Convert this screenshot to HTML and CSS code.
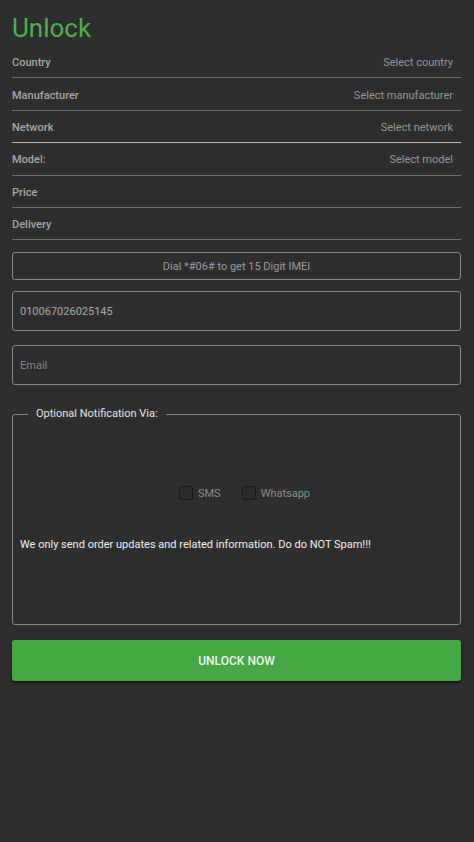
FILE: index.html
```html
<!DOCTYPE html>
<html>
<head>
<meta charset="utf-8">
<link rel="stylesheet" href="styles.css">
</head>
<body>
<div class="page">
  <h1 class="title">Unlock</h1>
  <div class="rows">
    <div class="row"><span class="label">Country</span><span class="value">Select country</span></div>
    <div class="row"><span class="label">Manufacturer</span><span class="value">Select manufacturer</span></div>
    <div class="row row-active"><span class="label">Network</span><span class="value">Select network</span></div>
    <div class="row"><span class="label">Model:</span><span class="value">Select model</span></div>
    <div class="row"><span class="label">Price</span><span class="value"></span></div>
    <div class="row"><span class="label">Delivery</span><span class="value"></span></div>
  </div>
  <div class="dial">Dial *#06# to get 15 Digit IMEI</div>
  <div class="field imei">010067026025145</div>
  <div class="field email">Email</div>
  <fieldset class="notify">
    <legend class="legend">Optional Notification Via:</legend>
    <div class="checks">
      <label class="check"><span class="box"></span><span class="check-text">SMS</span></label>
      <label class="check"><span class="box"></span><span class="check-text">Whatsapp</span></label>
    </div>
    <p class="note">We only send order updates and related information. Do do NOT Spam!!!</p>
  </fieldset>
  <div class="btn">UNLOCK NOW</div>
</div>
</body>
</html>
```
FILE: styles.css
```css
html, body {
  margin: 0;
  padding: 0;
  background: #2e2e2e;
  height: 100%;
}
body {
  font-family: Roboto, "Noto Sans", Arial, sans-serif;
  font-size: 11px;
  color: #aaa;
}
.page {
  padding: 13px 13px 0 12px;
}
.title {
  margin: 0;
  font-size: 26px;
  line-height: 30px;
  font-weight: 400;
  color: #4caf50;
  height: 33px;
}
.rows {
  display: flex;
  flex-direction: column;
}
.row {
  display: flex;
  justify-content: space-between;
  align-items: center;
  box-sizing: content-box;
  height: 29.4px;
  padding: 2px 8px 0 0;
  border-bottom: 1px solid #6e6e6e;
}
.row-active {
  border-bottom-color: #bdbdbd;
}
.label {
  font-weight: 500;
  color: #a6a6a6;
  font-size: 11px;
}
.value {
  color: #959595;
  font-size: 11px;
}
.dial {
  margin-top: 12px;
  height: 26px;
  border: 1px solid #8a8a8a;
  border-radius: 3px;
  display: flex;
  align-items: center;
  justify-content: center;
  color: #9a9a9a;
}
.field {
  margin-top: 11px;
  height: 38px;
  border: 1px solid #8a8a8a;
  border-radius: 3px;
  display: flex;
  align-items: center;
  padding-left: 7px;
}
.imei {
  color: #a8a8a8;
}
.email {
  margin-top: 14px;
  color: #858585;
}
.notify {
  margin: 22px 0 0 0;
  padding: 0;
  border: 1px solid #8a8a8a;
  border-radius: 3px;
  min-width: 0;
}
.legend {
  margin-left: 15px;
  padding: 0 8px;
  line-height: 14px;
  color: #e6e6e6;
  font-size: 11px;
}
.checks {
  margin-top: 64px;
  display: flex;
  justify-content: center;
  gap: 21px;
  padding-left: 16px;
}
.check {
  display: flex;
  align-items: center;
  gap: 5px;
  height: 16px;
}
.box {
  width: 12px;
  height: 12px;
  border: 1.5px solid #1b1b1b;
  border-radius: 2px;
  background: #2a2a2a;
}
.check-text {
  color: #8c8c8c;
  font-size: 11px;
}
.note {
  margin: 36px 0 0 0;
  padding: 0 0 71px 7px;
  line-height: 16px;
  color: #f0f0f0;
  font-size: 11px;
}
.btn {
  margin-top: 15px;
  height: 41px;
  background: #45a845;
  border-radius: 3px;
  display: flex;
  align-items: center;
  justify-content: center;
  color: #eef6ee;
  font-weight: 500;
  font-size: 12px;
  box-shadow: 0 2px 3px rgba(0, 0, 0, 0.55);
}
```
